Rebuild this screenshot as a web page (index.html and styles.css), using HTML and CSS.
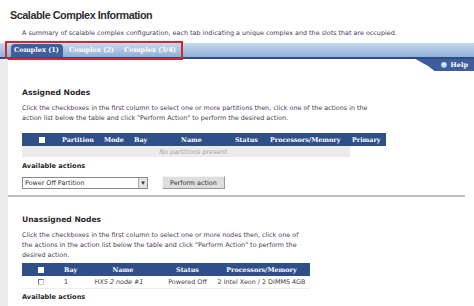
FILE: index.html
```html
<!DOCTYPE html>
<html lang="en">
<head>
  <meta charset="UTF-8">
  <title>Scalable Complex Information</title>
  <link rel="stylesheet" href="styles.css">
</head>
<body>

  <!-- page title -->
  <div class="page-head">
    <h1>Scalable Complex Information</h1>
    <p class="summary">A summary of scalable complex configuration, each tab indicating a unique complex and the slots that are occupied.</p>
  </div>

  <!-- complex tabs -->
  <div class="tab-bar">
    <div class="tab-group">
      <a class="tab active">Complex (1)</a>
      <a class="tab">Complex (2)</a>
      <a class="tab">Complex (3/4)</a>
    </div>
  </div>

  <div class="content">
    <div class="help-row">
      <a class="help"><span class="help-icon">?</span>Help</a>
    </div>

    <!-- assigned -->
    <div class="section">
      <h2>Assigned Nodes</h2>
      <p class="note wide">Click the checkboxes in the first column to select one or more partitions then, click one of the actions in the action list below the table and click "Perform Action" to perform the desired action.</p>

      <table class="grid assigned">
        <colgroup>
          <col style="width: 38px">
          <col style="width: 42px">
          <col style="width: 30px">
          <col style="width: 18px">
          <col style="width: 83px">
          <col style="width: 35px">
          <col style="width: 82px">
          <col style="width: 36px">
        </colgroup>
        <thead>
          <tr>
            <th class="chk"><span class="box"></span></th>
            <th>Partition</th>
            <th>Mode</th>
            <th>Bay</th>
            <th class="mid">Name</th>
            <th>Status</th>
            <th>Processors/Memory</th>
            <th>Primary</th>
          </tr>
        </thead>
        <tbody>
          <tr class="empty">
            <td colspan="7">No partitions present</td>
            <td class="blank"></td>
          </tr>
        </tbody>
      </table>

      <h3>Available actions</h3>
      <div class="actions">
        <div class="select">
          <span>Power Off Partition</span>
          <span class="arrow">▾</span>
        </div>
        <button class="btn">Perform action</button>
      </div>
    </div>

    <hr class="divider">

    <!-- unassigned -->
    <div class="section">
      <h2 class="second">Unassigned Nodes</h2>
      <p class="note narrow">Click the checkboxes in the first column to select one or more nodes then, click one of the actions in the action list below the table and click "Perform Action" to perform the desired action.</p>

      <table class="grid unassigned">
        <colgroup>
          <col style="width: 36px">
          <col style="width: 26px">
          <col style="width: 78px">
          <col style="width: 51px">
          <col style="width: 97px">
        </colgroup>
        <thead>
          <tr>
            <th class="chk"><span class="box"></span></th>
            <th class="bay">Bay</th>
            <th class="mid">Name</th>
            <th class="mid">Status</th>
            <th class="mid">Processors/Memory</th>
          </tr>
        </thead>
        <tbody>
          <tr>
            <td class="chk"><span class="box"></span></td>
            <td class="bay">1</td>
            <td class="mid node"><em>HX5 2 node #1</em></td>
            <td class="mid">Powered Off</td>
            <td class="mid">2 Intel Xeon / 2 DIMMS 4GB</td>
          </tr>
        </tbody>
      </table>

      <h3 class="last">Available actions</h3>
    </div>
  </div>

</body>
</html>
```

FILE: styles.css
```css
* {
  margin: 0;
  padding: 0;
  box-sizing: border-box;
}
html, body {
  height: 100%;
  background: #fff;
  font-family: 'DejaVu Sans', Verdana, sans-serif;
  color: #333;
  overflow: hidden;
}
body {
  display: flex;
  flex-direction: column;
}

.page-head {
  padding: 8px 0 0 10px;
}

h1 {
  font-family: 'Liberation Sans', Arial, sans-serif;
  font-size: 10.8px;
  letter-spacing: -0.45px;
  font-weight: bold;
  color: #2f2f2f;
  line-height: 14px;
}

.summary {
  margin: 6px 0 0 12px;
  font-size: 6.4px;
  line-height: 10px;
  color: #4b3b55;
}

/* blue tab strip */
.tab-bar {
  margin-top: 5px;
  height: 16px;
  flex-shrink: 0;
  background: linear-gradient(#c8d9ec, #8fb0d8);
  border-bottom: 2px solid #2f4c86;
  display: flex;
  align-items: flex-end;
  padding-left: 8px;
}

.tab-group {
  display: flex;
  outline: 2px solid #d8242e;
  outline-offset: 1px;
  height: 13px;
  padding-left: 3px;
}

.tab {
  font-family: 'DejaVu Serif', serif;
  font-size: 6.6px;
  font-weight: bold;
  color: #fff;
  padding: 0 4px;
  line-height: 13px;
  border-radius: 4px 4px 0 0;
  margin-right: 2px;
}

.tab:last-child {
  margin-right: 0;
}

.tab.active {
  background: #3e5e9c;
  padding: 0 4px 0 3px;
}

.content {
  flex: 1;
  border-left: 8px solid #ececec;
}

.help-row {
  display: flex;
  justify-content: flex-end;
}

.help {
  height: 12px;
  padding: 0 6px 0 26px;
  font-family: 'DejaVu Serif', serif;
  font-size: 6.6px;
  font-weight: bold;
  line-height: 12px;
  color: #fff;
  display: flex;
  align-items: center;
  gap: 3px;
  background: #3d5e9a;
  clip-path: polygon(0 0, 100% 0, 100% 100%, 19px 100%, 13px 60%);
}

.help-icon {
  width: 6px;
  height: 6px;
  border-radius: 50%;
  background: radial-gradient(circle at 35% 35%, #e4f2ff, #5a9fe8);
  color: #fff;
  font-size: 5px;
  line-height: 6px;
  text-align: center;
}

.section {
  padding-left: 14px;
}

h2 {
  margin-top: 16px;
  font-size: 7.6px;
  font-weight: bold;
  color: #2a2a2a;
  line-height: 12px;
}

h2.second {
  margin-top: 17px;
}

.note {
  margin-top: 4px;
  font-size: 6.4px;
  line-height: 10px;
  color: #4b3b55;
}

.note.wide { width: 352px; }
.note.narrow { width: 284px; }

.grid {
  border-collapse: collapse;
  table-layout: fixed;
  font-size: 6.4px;
}

.grid th {
  background: #2f4f8a;
  color: #fff;
  font-family: 'DejaVu Serif', serif;
  font-weight: bold;
  height: 13px;
  padding: 0 0 0 2px;
  text-align: left;
  white-space: nowrap;
}

.grid td {
  height: 11px;
  padding: 0;
  white-space: nowrap;
  color: #444;
}

.grid .chk {
  text-align: center;
  padding: 0 0 0 2px;
}

.grid .mid {
  text-align: center;
  padding: 0;
}

.grid .node {
  padding-right: 8px;
}

.box {
  display: inline-block;
  width: 6px;
  height: 6px;
  background: #fff;
  vertical-align: middle;
}

td .box {
  border: 1px solid #777;
  border-right-color: #ccc;
  border-bottom-color: #ccc;
}

.assigned {
  width: 364px;
  margin-top: 10px;
}

.empty td {
  background: #ebebeb;
  text-align: center;
  font-style: italic;
  color: #a8a8a8;
  padding-left: 14px;
}

.empty td.blank { background: #fff; }

.unassigned {
  width: 288px;
  margin-top: 3px;
}
.unassigned .bay { padding-left: 6px; }
.unassigned td {
  height: 12px;
  border-bottom: 1px solid #eee;
}

h3 {
  margin-top: 4px;
  font-size: 6.6px;
  font-weight: bold;
  color: #2a2a2a;
  line-height: 10px;
}

h3.last {
  margin-top: 3px;
}

.actions {
  margin-top: 5px;
  display: flex;
  align-items: center;
  gap: 14px;
}

.select {
  width: 126px;
  height: 12px;
  border: 1px solid #8a8a8a;
  display: flex;
  align-items: center;
  justify-content: space-between;
  font-size: 6.4px;
  color: #333;
  padding-left: 2px;
}

.arrow {
  width: 9px;
  height: 10px;
  background: #e4e4e4;
  border-left: 1px solid #aaa;
  font-size: 7px;
  line-height: 10px;
  text-align: center;
}

.btn {
  height: 13px;
  padding: 0 7px;
  font-family: 'DejaVu Sans', sans-serif;
  font-size: 6.4px;
  color: #333;
  background: #dedede;
  border: 1px solid #999;
  border-top-color: #f4f4f4;
  border-left-color: #f4f4f4;
}

.divider {
  margin: 6px 9px 0 0;
  border: none;
  border-top: 2px solid #b8bec6;
}
```
